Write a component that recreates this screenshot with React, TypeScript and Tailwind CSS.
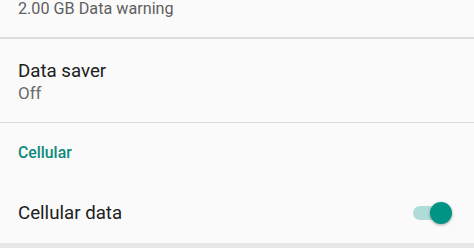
import React from "react";

function Toggle({ on }: { on: boolean }) {
  return (
    <div className="relative h-[22px] w-[39px] shrink-0">
      <div
        className={`absolute left-0 top-[4px] h-[14px] w-[34px] rounded-full ${
          on ? "bg-[#afdcd7]" : "bg-[#bdbdbd]"
        }`}
      />
      <div
        className={`absolute top-0 h-[22px] w-[22px] rounded-full shadow-[0_1px_3px_rgba(0,0,0,0.35)] ${
          on ? "right-0 bg-[#009485]" : "left-0 bg-[#f1f1f1]"
        }`}
      />
    </div>
  );
}

export default function App() {
  return (
    <div
      className="flex h-[248px] w-[474px] flex-col overflow-hidden bg-[#fafafa]"
      style={{ fontFamily: "Roboto, 'Noto Sans', sans-serif" }}
    >
      <div className="h-[37px] shrink-0 px-[18px]">
        <div className="text-[16.2px] leading-[18px] text-[#5f5f5f]">
          2.00 GB Data warning
        </div>
      </div>
      <div className="h-[2px] shrink-0 bg-[#dddddd]" />

      <div className="shrink-0 px-[18px] pt-[20px] pb-[19px]">
        <div className="text-[18.7px] leading-[24px] text-[#202020]">
          Data saver
        </div>
        <div className="text-[17px] leading-[20px] text-[#6b6b6b]">Off</div>
      </div>
      <div className="h-px shrink-0 bg-[#d9d9d9]" />

      <div className="shrink-0 px-[18px] pt-[20px]">
        <div className="text-[15.8px] font-medium leading-[20px] text-[#0d8a7c]">
          Cellular
        </div>
      </div>

      <div className="flex shrink-0 items-center justify-between pt-[38px] pb-[18px] pl-[18px] pr-[22px]">
        <div className="text-[18.7px] leading-[24px] text-[#202020]">
          Cellular data
        </div>
        <Toggle on />
      </div>
      <div className="flex-1 bg-[#e6e6e6]" />
    </div>
  );
}
